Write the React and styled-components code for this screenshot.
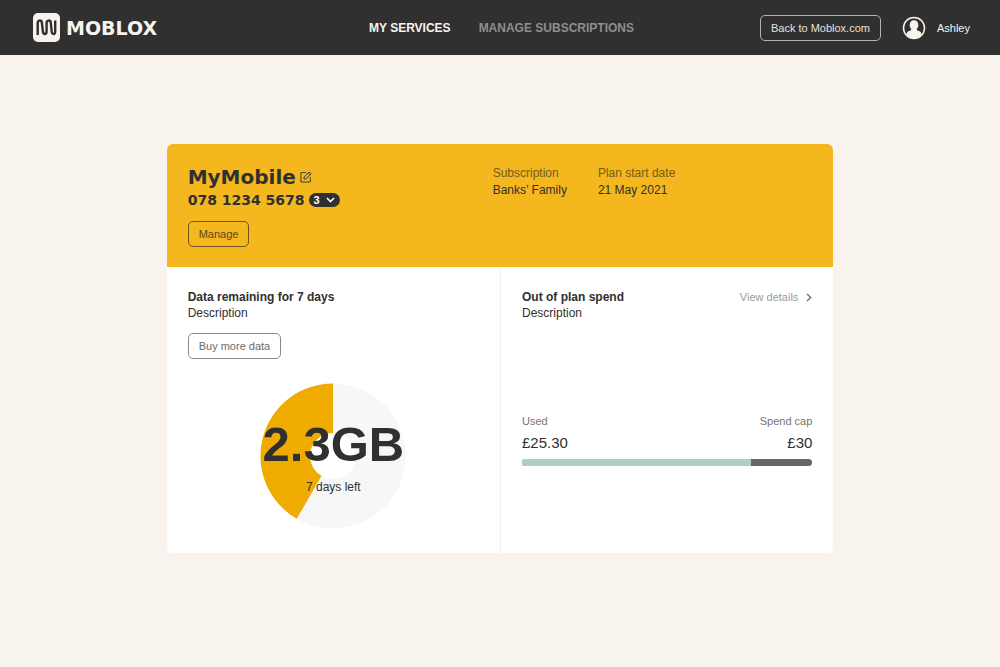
import React from "react"
import styled, { createGlobalStyle, ThemeProvider } from "styled-components"

const theme = {
  dark: "#303030",
  cream: "#f8f3ec",
  yellow: "#f4b71e",
  chart: "#f0ab00",
  teal: "#accfca",
  sans: '"Liberation Sans", Arial, sans-serif',
  wide: '"DejaVu Sans", Verdana, sans-serif'
}

const GlobalStyle = createGlobalStyle`
  *, *::before, *::after {
    box-sizing: border-box;
  }
  body {
    margin: 0;
    background: ${theme.cream};
    color: ${theme.dark};
    font-family: ${theme.sans};
    font-size: 12px;
    line-height: 16px;
  }
  h1, h2, p, dl, dt, dd {
    margin: 0;
  }
`

const LogoMark = () => (
  <svg width="27" height="29" viewBox="0 0 27 29" aria-hidden="true">
    <rect width="27" height="29" rx="5" fill="#f8f3ec" />
    <path
      d="M4.700 22V10C4.700 6.800 8.600 6.800 8.900 9.800L9.900 18.500C10.300 21.800 13.600 21.800 13.600 18.500V10C13.600 6.800 17.500 6.800 17.800 9.800L18.700 18.500C19 21.800 22.200 21.800 22.200 18.500V7.500"
      fill="none"
      stroke="#303030"
      strokeWidth="2.400"
    />
  </svg>
)

const Avatar = () => (
  <svg width="24" height="24" viewBox="0 0 24 24" aria-hidden="true">
    <circle cx="12" cy="12" r="10.500" fill="#303030" stroke="#f8f3ec" strokeWidth="1.500" />
    <path
      d="M12 4.300c-2.700 0-4.300 1.900-4.300 4.600 0 1.700.6 3 1.600 4-.2 1.300-1 1.700-2.200 2.100-1.700.6-2.500 1.700-2.700 3.600A10.300 10.300 0 0 0 12 22.400a10.300 10.300 0 0 0 7.600-3.800c-.2-1.900-1-3-2.700-3.600-1.200-.4-2-.8-2.200-2.100 1-1 1.600-2.300 1.600-4 0-2.700-1.600-4.600-4.300-4.600z"
      fill="#f8f3ec"
    />
  </svg>
)

const EditIcon = () => (
  <svg width="12" height="12" viewBox="0 0 12 12" fill="none" stroke="#303030" strokeWidth="0.9" aria-hidden="true">
    <path d="M6.200 1.600H.9V11H10.300V6.200" />
    <path d="M4 8V6.100L9.200.9l1.900 1.900L5.900 8zM7.900 2.200l1.900 1.900" />
  </svg>
)

const ChevronDown = () => (
  <svg width="9" height="6" viewBox="0 0 9 6" fill="none" stroke="#fff" strokeWidth="1.700" aria-hidden="true">
    <path d="M1 1l3.500 3.500L8 1" />
  </svg>
)

const ChevronRight = () => (
  <svg width="6" height="9" viewBox="0 0 6 9" fill="none" stroke="#777" strokeWidth="1.500" aria-hidden="true">
    <path d="M1 1l3.700 3.500L1 8" />
  </svg>
)

// Ring segment that runs from 210 degrees round to the top
const DataChart = () => (
  <Ring viewBox="0 0 146 146" aria-hidden="true">
    <circle cx="73" cy="73" r="72.500" fill="#f7f7f7" />
    <path d="M73 73V.5A72.500 72.500 0 0 0 36.750 135.800z" fill={theme.chart} />
    <circle cx="73" cy="73" r="23" fill="#fff" />
  </Ring>
)

const App = () => (
  <ThemeProvider theme={theme}>
    <GlobalStyle />
    <Header>
      <Logo href="#home">
        <LogoMark />
        MOBLOX
      </Logo>
      <Nav>
        <NavLink href="#services" $active>
          MY SERVICES
        </NavLink>
        <NavLink href="#subscriptions">MANAGE SUBSCRIPTIONS</NavLink>
      </Nav>
      <Account>
        <Button $variant="light">Back to Moblox.com</Button>
        <User href="#account">
          <Avatar />
          Ashley
        </User>
      </Account>
    </Header>
    <Main>
      <Card>
        <Banner>
          <div>
            <TitleRow>
              <Title>MyMobile</Title>
              <IconButton aria-label="Edit name">
                <EditIcon />
              </IconButton>
            </TitleRow>
            <NumberRow>
              <PhoneNumber>078 1234 5678</PhoneNumber>
              <CountButton>
                3
                <ChevronDown />
              </CountButton>
            </NumberRow>
            <Button $variant="dark">Manage</Button>
          </div>
          <Details>
            <div>
              <Term>Subscription</Term>
              <Value>Banks’ Family</Value>
            </div>
            <div>
              <Term>Plan start date</Term>
              <Value>21 May 2021</Value>
            </div>
          </Details>
        </Banner>
        <Panels>
          <Panel>
            <PanelTitle>Data remaining for 7 days</PanelTitle>
            <Description>Description</Description>
            <Button>Buy more data</Button>
            <Chart>
              <DataChart />
              <ChartLabel>
                <Amount>2.3GB</Amount>
                <p>7 days left</p>
              </ChartLabel>
            </Chart>
          </Panel>
          <Panel>
            <PanelHead>
              <PanelTitle>Out of plan spend</PanelTitle>
              <DetailsLink href="#details">
                View details
                <ChevronRight />
              </DetailsLink>
            </PanelHead>
            <Description>Description</Description>
            <Spend>
              <SpendRow>
                <div>
                  <SpendLabel>Used</SpendLabel>
                  <Price>£25.30</Price>
                </div>
                <div>
                  <SpendLabel>Spend cap</SpendLabel>
                  <Price>£30</Price>
                </div>
              </SpendRow>
              <Track>
                <Fill style={{ width: "79%" }} />
              </Track>
            </Spend>
          </Panel>
        </Panels>
      </Card>
    </Main>
  </ThemeProvider>
)

const Header = styled.header`
  display: grid;
  grid-template-columns: 1fr auto 1fr;
  align-items: center;
  height: 55px;
  padding: 0 30px 0 33px;
  background: ${({ theme }) => theme.dark};
`

const Logo = styled.a`
  display: flex;
  align-items: center;
  gap: 6px;
  color: ${({ theme }) => theme.cream};
  font-family: ${({ theme }) => theme.wide};
  font-size: 19px;
  font-weight: bold;
  text-decoration: none;
`

const Nav = styled.nav`
  display: flex;
  gap: 28px;
`

const NavLink = styled.a`
  color: ${({ $active, theme }) => ($active ? theme.cream : "#8f8e8c")};
  font-weight: bold;
  text-decoration: none;
`

const Account = styled.div`
  display: flex;
  align-items: center;
  justify-content: flex-end;
  gap: 21px;
`

const User = styled.a`
  display: flex;
  align-items: center;
  gap: 11px;
  color: ${({ theme }) => theme.cream};
  font-size: 11px;
  text-decoration: none;
`

const buttonColors = {
  light: "color: #e6e2dc; border-color: #b5b2ae;",
  dark: "color: #5a4a22; border-color: #6b551f;",
  plain: "color: #6c6c6c; border-color: #8a8a8a;"
}

const Button = styled.button`
  height: 26px;
  padding: 0 10px;
  border: 1px solid;
  border-radius: 5px;
  background: none;
  font-family: inherit;
  font-size: 11px;
  cursor: pointer;
  ${({ $variant }) => buttonColors[$variant || "plain"]}
`

const Main = styled.main`
  display: flex;
  justify-content: center;
  padding: 89px 0;
`

const Card = styled.section`
  width: calc(100% * 2 / 3);
  border-radius: 6px;
  background: #fff;
  overflow: hidden;
`

const Banner = styled.div`
  display: grid;
  grid-template-columns: 305px 1fr;
  padding: 20px 21px;
  background: ${({ theme }) => theme.yellow};
`

const TitleRow = styled.div`
  display: flex;
  align-items: center;
  gap: 4px;
`

const Title = styled.h1`
  font-family: ${({ theme }) => theme.wide};
  font-size: 20px;
  line-height: 26px;
`

const IconButton = styled.button`
  display: flex;
  padding: 0;
  border: 0;
  background: none;
  cursor: pointer;
`

const NumberRow = styled.div`
  display: flex;
  align-items: center;
  gap: 4px;
  margin-bottom: 11px;
`

const PhoneNumber = styled.p`
  font-family: ${({ theme }) => theme.wide};
  font-size: 14px;
  font-weight: bold;
  line-height: 20px;
`

const CountButton = styled.button`
  display: flex;
  align-items: center;
  gap: 6px;
  height: 14px;
  padding: 0 5px;
  border: 0;
  border-radius: 7px;
  background: ${({ theme }) => theme.dark};
  color: #fff;
  font-family: inherit;
  font-size: 11px;
  font-weight: bold;
  cursor: pointer;
`

const Details = styled.dl`
  display: flex;
  gap: 31px;
`

const Term = styled.dt`
  color: #775b1c;
  line-height: 18px;
`

const Value = styled.dd`
  line-height: 16px;
`

const Panels = styled.div`
  display: grid;
  grid-template-columns: 1fr 1fr;
`

const Panel = styled.section`
  display: flex;
  flex-direction: column;
  align-items: flex-start;
  padding: 22px 21px 24px;

  & + & {
    border-left: 1px solid #f3f1ec;
  }
`

const PanelHead = styled.div`
  display: flex;
  align-self: stretch;
  justify-content: space-between;
`

const PanelTitle = styled.h2`
  font-size: 12px;
  line-height: 16px;
`

const DetailsLink = styled.a`
  display: flex;
  align-items: center;
  gap: 8px;
  color: #9a9a9a;
  font-size: 11px;
  text-decoration: none;
`

const Description = styled.p`
  margin-bottom: 12px;
`

const Chart = styled.div`
  position: relative;
  align-self: center;
  display: flex;
  margin-top: 24px;
`

const Ring = styled.svg`
  width: 146px;
  height: 146px;
`

const ChartLabel = styled.div`
  position: absolute;
  inset: 0;
  display: flex;
  flex-direction: column;
  align-items: center;
  justify-content: center;
  gap: 7px;
  padding-bottom: 2px;
`

const Amount = styled.p`
  font-size: 49px;
  font-weight: bold;
  line-height: 56px;
`

const Spend = styled.div`
  align-self: stretch;
  margin-top: 78px;
`

const SpendRow = styled.dl`
  display: flex;
  justify-content: space-between;

  & > :last-child {
    text-align: right;
  }
`

const SpendLabel = styled.dt`
  color: #757575;
  font-size: 11px;
  line-height: 20px;
`

const Price = styled.dd`
  font-size: 15px;
  line-height: 24px;
`

const Track = styled.div`
  height: 7px;
  margin-top: 4px;
  border-radius: 4px;
  background: #666;
  overflow: hidden;
`

const Fill = styled.div`
  height: 100%;
  background: ${({ theme }) => theme.teal};
`

export default App
